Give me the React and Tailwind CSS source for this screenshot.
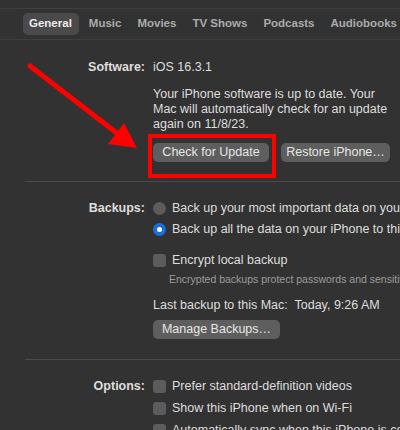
import React from "react";

const font = { fontFamily: "'Liberation Sans', Arial, sans-serif" };

function Radio({ checked }) {
  return checked ? (
    <span className="flex h-[13px] w-[13px] shrink-0 items-center justify-center rounded-full bg-[#1b6fdc]">
      <span className="h-[5px] w-[5px] rounded-full bg-white" />
    </span>
  ) : (
    <span className="h-[13px] w-[13px] shrink-0 rounded-full bg-[#5c5c5c]" />
  );
}

function Check() {
  return <span className="h-[13px] w-[13px] shrink-0 rounded-[3px] bg-[#5c5c5c]" />;
}

function Btn({ children, w }) {
  return (
    <span className={`inline-flex h-[19px] items-center justify-center whitespace-nowrap rounded-[5px] bg-[#5e5e5e] text-[12.5px] text-[#e6e6e6] ${w}`}>
      {children}
    </span>
  );
}

export default function App() {
  const tabs = ["General", "Music", "Movies", "TV Shows", "Podcasts", "Audiobooks"];
  return (
    <div className="relative h-[430px] w-[400px] overflow-hidden bg-[#323232] text-[#dedede]" style={font}>
      <div className="h-[9px] border-b border-[#3f3f3f]" />
      <div className="flex h-[31px] items-center gap-[4px] whitespace-nowrap border-b border-[#3f3f3f] pl-[23px] text-[11.5px] font-bold text-[#ababab]">
        {tabs.map((t, i) => (
          <span
            key={t}
            className={
              i === 0
                ? "rounded-[5px] bg-[#4a4a4a] py-[2px] pl-[6px] pr-[7px] text-[#ececec]"
                : "px-[6px]"
            }
          >
            {t}
          </span>
        ))}
      </div>

      <div className="grid grid-cols-[145px_1fr] gap-x-[8px] pt-[20px] text-[12.5px] leading-[15px]">
        <div className="text-right font-bold">Software:</div>
        <div>iOS 16.3.1</div>
        <div />
        <div className="mt-[12px] whitespace-nowrap">
          Your iPhone software is up to date. Your
          <br />
          Mac will automatically check for an update
          <br />
          again on 11/8/23.
        </div>
        <div />
        <div className="mt-[11px] flex gap-[12px]">
          <Btn w="w-[116px]">Check for Update</Btn>
          <Btn w="w-[109px]">Restore iPhone…</Btn>
        </div>
      </div>

      <div className="ml-[25px] mt-[19px] border-t border-[#4a4a4a]" />

      <div className="grid grid-cols-[145px_1fr] gap-x-[8px] pt-[19px] text-[12.5px] leading-[15px]">
        <div className="text-right font-bold">Backups:</div>
        <div className="flex items-center gap-[6px] whitespace-nowrap">
          <Radio />
          <span>Back up your most important data on your iPhone to iCloud</span>
        </div>
        <div />
        <div className="mt-[6px] flex items-center gap-[6px] whitespace-nowrap">
          <Radio checked />
          <span>Back up all the data on your iPhone to this Mac</span>
        </div>
        <div />
        <div className="mt-[16px] flex items-center gap-[6px] whitespace-nowrap">
          <Check />
          <span>Encrypt local backup</span>
        </div>
        <div />
        <div className="mt-[4px] whitespace-nowrap pl-[16px] text-[10.5px] text-[#9c9c9c]">
          Encrypted backups protect passwords and sensitive personal data.
        </div>
        <div />
        <div className="mt-[11px] whitespace-nowrap">Last backup to this Mac:&nbsp; Today, 9:26 AM</div>
        <div />
        <div className="mt-[7px]">
          <Btn w="w-[127px]">Manage Backups…</Btn>
        </div>
      </div>

      <div className="ml-[25px] mt-[20px] border-t border-[#4a4a4a]" />

      <div className="grid grid-cols-[145px_1fr] gap-x-[8px] pt-[19px] text-[12.5px] leading-[15px]">
        <div className="text-right font-bold">Options:</div>
        <div className="flex items-center gap-[6px] whitespace-nowrap">
          <Check />
          <span>Prefer standard-definition videos</span>
        </div>
        <div />
        <div className="mt-[7px] flex items-center gap-[6px] whitespace-nowrap">
          <Check />
          <span>Show this iPhone when on Wi-Fi</span>
        </div>
        <div />
        <div className="mt-[7px] flex items-center gap-[6px] whitespace-nowrap">
          <Check />
          <span>Automatically sync when this iPhone is connected</span>
        </div>
      </div>

      {/* annotation overlay */}
      <div className="absolute left-[148px] top-[134px] h-[44px] w-[128px] border-[4px] border-[#ff0000]" />
      <svg className="absolute left-0 top-0" width="400" height="430">
        <line x1="30" y1="66" x2="118" y2="134" stroke="#ff0000" strokeWidth="5" strokeLinecap="round" />
        <polygon points="137,148 108,144 124,123" fill="#ff0000" />
      </svg>
    </div>
  );
}
